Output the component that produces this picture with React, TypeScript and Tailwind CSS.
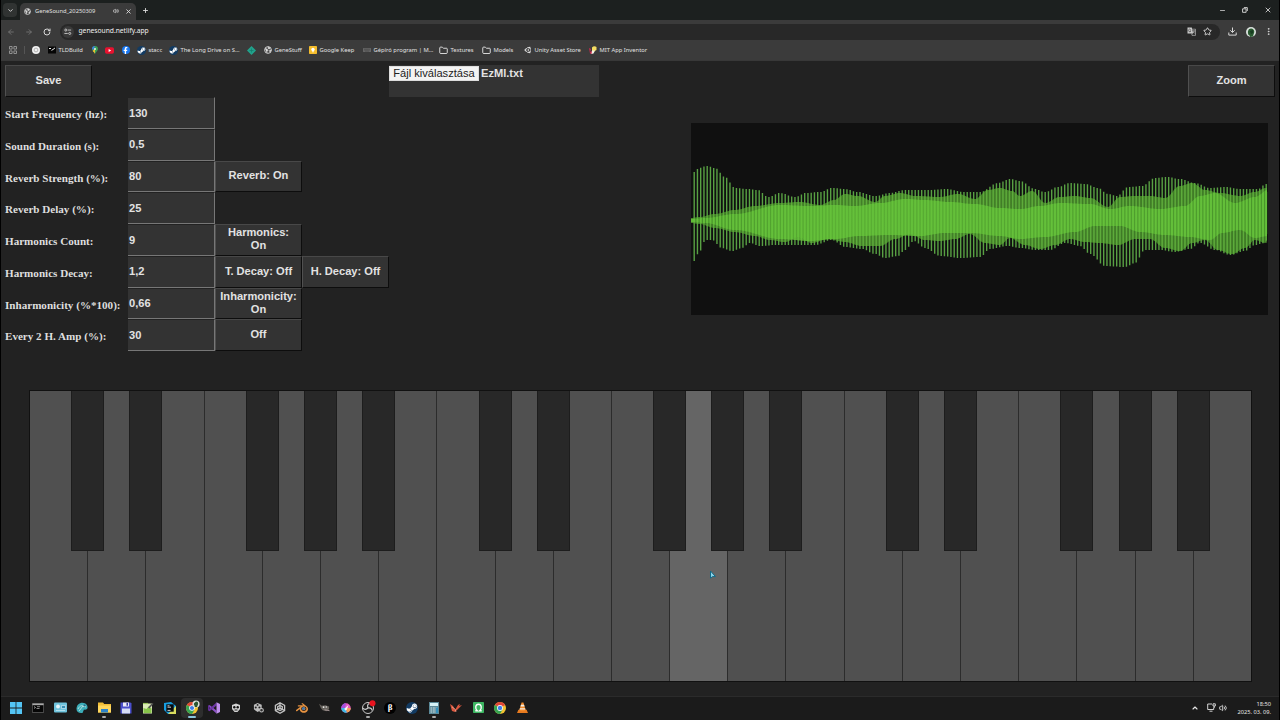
import React from "react";
import {
  FaSteamSymbol,
  FaFacebookF,
  FaUnity,
} from "react-icons/fa";
import { SiBlender } from "react-icons/si";
import {
  ArrowLeft,
  ArrowRight,
  ChevronDown,
  ChevronUp,
  EllipsisVertical,
  Folder,
  Minus,
  Plus,
  RotateCw,
  Star,
  Volume2,
  X,
} from "lucide-react";

type Pt = [number, number];

const OUTER_TOP: Pt[] = [
  [691, 219], [693, 186], [694, 172], [699, 168], [707, 166], [715, 168], [725, 177], [735, 188], [748, 189],
  [758, 190], [768, 197], [780, 193], [795, 197], [806, 193], [820, 192], [832, 188], [845, 189], [858, 192],
  [875, 196], [890, 193], [905, 190], [930, 190], [945, 189], [965, 192], [980, 192], [998, 183], [1010, 179],
  [1020, 181], [1035, 189], [1045, 192], [1058, 187], [1070, 183], [1085, 184], [1098, 188], [1108, 194],
  [1117, 196], [1128, 187], [1142, 186], [1155, 178], [1167, 177], [1180, 179], [1195, 183], [1210, 188],
  [1225, 187], [1240, 189], [1258, 189], [1266, 184], [1268, 190],
];

const OUTER_BOTTOM: Pt[] = [
  [691, 223], [694, 261], [698, 254], [706, 240], [712, 240], [722, 248], [732, 251], [742, 248], [750, 243],
  [760, 246], [775, 245], [800, 245], [815, 245], [832, 240], [845, 247], [862, 249], [875, 254], [885, 258],
  [898, 256], [905, 250], [914, 241], [925, 248], [940, 256], [960, 258], [980, 257], [990, 249], [1008, 246],
  [1020, 248], [1035, 250], [1050, 250], [1065, 243], [1080, 246], [1090, 254], [1105, 266], [1125, 267],
  [1135, 263], [1145, 250], [1160, 250], [1175, 252], [1190, 249], [1200, 243], [1215, 250], [1230, 255],
  [1245, 251], [1255, 245], [1265, 243], [1268, 236],
];

const BODY_TOP: Pt[] = [
  [691, 218], [700, 217], [715, 214], [735, 210], [755, 206], [780, 203], [800, 202], [820, 205], [834, 200],
  [845, 194], [858, 196], [875, 202], [885, 196], [900, 193], [915, 196], [940, 197], [958, 194], [975, 199],
  [988, 190], [1000, 188], [1012, 191], [1020, 196], [1032, 191], [1045, 203], [1060, 197], [1075, 196],
  [1090, 198], [1108, 207], [1120, 197], [1135, 196], [1150, 196], [1165, 198], [1180, 186], [1192, 183],
  [1205, 190], [1220, 193], [1240, 196], [1255, 192], [1266, 188], [1268, 192],
];

const BODY_BOTTOM: Pt[] = [
  [691, 223], [700, 224], [715, 228], [735, 232], [755, 236], [770, 240], [785, 242], [798, 237], [812, 243],
  [828, 239], [845, 242], [862, 246], [880, 246], [895, 239], [910, 234], [925, 240], [940, 241], [955, 239],
  [970, 234], [985, 243], [1000, 245], [1010, 238], [1025, 245], [1040, 249], [1055, 245], [1070, 239],
  [1085, 242], [1100, 243], [1118, 245], [1135, 239], [1150, 239], [1165, 248], [1180, 251], [1192, 243],
  [1205, 240], [1218, 250], [1232, 254], [1245, 248], [1255, 240], [1266, 243], [1268, 234],
];

const CORE_TOP: Pt[] = [
  [691, 219], [705, 218], [735, 214], [780, 205], [810, 206], [835, 205], [855, 206], [880, 203], [905, 199],
  [925, 200], [950, 202], [975, 204], [1000, 208], [1020, 209], [1040, 206], [1060, 203], [1090, 204],
  [1110, 209], [1130, 206], [1160, 209], [1185, 206], [1200, 196], [1215, 193], [1235, 203], [1255, 197],
  [1268, 190],
];

const CORE_BOTTOM: Pt[] = [
  [691, 222], [705, 223], [735, 230], [780, 239], [810, 241], [835, 239], [860, 236], [890, 235], [920, 236],
  [945, 233], [970, 233], [1000, 236], [1020, 239], [1045, 237], [1075, 232], [1095, 226], [1120, 226],
  [1140, 232], [1165, 235], [1190, 237], [1210, 240], [1222, 233], [1240, 230], [1255, 238], [1268, 236],
];

const WAVE_X0 = 691;
const BAR_PITCH = 3.25;

function at(points: Pt[], x: number): number {
  for (let i = 1; i < points.length; i++) {
    const [x1, y1] = points[i];
    if (x <= x1) {
      const [x0, y0] = points[i - 1];
      const t = (x - x0) / (x1 - x0);
      return y0 + (y1 - y0) * ((1 - Math.cos(Math.PI * t)) / 2);
    }
  }
  return points[points.length - 1][1];
}

function band(top: Pt[], bottom: Pt[]): string {
  const up: string[] = [];
  const down: string[] = [];
  for (let x = 691; x <= 1268; x += 1.5) {
    up.push(`${x} ${at(top, x).toFixed(1)}`);
    down.unshift(`${x} ${at(bottom, x).toFixed(1)}`);
  }
  return `M${up.join("L")}L${down.join("L")}Z`;
}

function bars(top: Pt[], bottom: Pt[], offset: number): string {
  let d = "";
  for (let x = WAVE_X0 + offset; x < 1268; x += BAR_PITCH) {
    d += `M${x.toFixed(2)} ${at(top, x).toFixed(1)}V${at(bottom, x).toFixed(1)}`;
  }
  return d;
}

function Waveform() {
  return (
    <svg className="block h-[192px] w-[577px] bg-[#101010]" viewBox="691 123 577 192">
      <defs>
        <linearGradient id="grain" x1="691" x2="1268" y1="0" y2="0" gradientUnits="userSpaceOnUse">
          <stop offset="0" stopColor="#2c6a1c" stopOpacity="0.6" />
          <stop offset="0.12" stopColor="#2c6a1c" stopOpacity="0.35" />
          <stop offset="0.25" stopColor="#2c6a1c" stopOpacity="0.15" />
          <stop offset="0.5" stopColor="#2c6a1c" stopOpacity="0.25" />
          <stop offset="1" stopColor="#2c6a1c" stopOpacity="0.5" />
        </linearGradient>
      </defs>
      <path d={bars(OUTER_TOP, OUTER_BOTTOM, 3.2)} stroke="#58a043" strokeWidth="1.4" fill="none" />
      <path d={band(BODY_TOP, BODY_BOTTOM)} fill="#4f932f" fillOpacity="0.88" />
      <path d={bars(BODY_TOP, BODY_BOTTOM, 3.2)} stroke="#67bd42" strokeOpacity="0.6" strokeWidth="1.3" fill="none" />
      <path d={band(CORE_TOP, CORE_BOTTOM)} fill="#66c63b" fillOpacity="0.82" />
      <path d={bars(BODY_TOP, BODY_BOTTOM, 4.85)} stroke="url(#grain)" strokeWidth="1" fill="none" />
    </svg>
  );
}

function Globe({ className = "size-2" }: { className?: string }) {
  return (
    <svg className={className} viewBox="0 0 16 16">
      <circle cx="8" cy="8" r="6.8" fill="#444" stroke="#d5d5d5" strokeWidth="1.8" />
      <path d="M2 5l4 1 2 3-2 2v3M9 1.5L8 5l3 1 1-3M15 8l-4 1 1 4" fill="#ddd" stroke="#ddd" strokeWidth="1.2" />
    </svg>
  );
}

function SteamDisc({ className = "size-2.5" }: { className?: string }) {
  return (
    <span className={`${className} flex items-center justify-center overflow-hidden rounded-full bg-[#123b63]`}>
      <FaSteamSymbol className="size-full text-white" />
    </span>
  );
}

function AppsGrid() {
  return (
    <svg className="size-2" viewBox="0 0 8 8" fill="none" stroke="#a5a5a5" strokeWidth="0.8">
      <path d="M.5.5h2.6v2.6H.5zM4.9.5h2.6v2.6H4.9zM.5 4.9h2.6v2.6H.5zM4.9 4.9h2.6v2.6H4.9z" />
    </svg>
  );
}

function TabStrip() {
  return (
    <div className="flex h-5 items-end bg-[#1c201f] text-[#e0e0e0]">
      <div className="mb-[3px] ml-[2px] flex h-[14px] w-[14px] items-center justify-center rounded bg-[#303332]">
        <ChevronDown className="size-[7px]" strokeWidth={3} />
      </div>
      <div className="ml-[3px] flex h-[17px] w-[116px] items-center rounded-t-[5px] bg-[#3b3b3b] pb-[1px] pl-[4px]">
        <Globe className="size-[7px]" />
        <span className="ml-[4px] w-[78px] whitespace-nowrap text-[5.75px]">GeneSound_20250309</span>
        <Volume2 className="size-[6px]" strokeWidth={2.5} />
        <X className="ml-[6px] size-[7px]" strokeWidth={3} />
      </div>
      <Plus className="mb-[6px] ml-[6px] size-[7px]" strokeWidth={3} />
      <div className="mb-[6px] ml-auto mr-[7px] flex items-center">
        <Minus className="size-[7px]" strokeWidth={2.5} />
        <svg className="ml-[16px] size-[6px]" viewBox="0 0 6 6" fill="none" stroke="#e0e0e0" strokeWidth="0.9">
          <path d="M.6 1.8h3.5v3.5H.6zM1.9 .6h3.4v3.4" />
        </svg>
        <X className="ml-[16px] size-[8px]" strokeWidth={2.5} />
      </div>
    </div>
  );
}

function AddressRow() {
  return (
    <div className="flex h-[23px] items-center bg-[#3b3b3b] text-[#d8d8d8]">
      <ArrowLeft className="ml-[6px] size-[8px] text-[#777]" strokeWidth={2.5} />
      <ArrowRight className="ml-[10px] size-[8px] text-[#777]" strokeWidth={2.5} />
      <RotateCw className="ml-[10px] size-[8px]" strokeWidth={3} />
      <div className="ml-[9px] flex h-4 w-[1160px] items-center rounded-full bg-[#282828] pl-[2px] pr-[8px]">
        <span className="flex size-[12px] items-center justify-center rounded-full bg-[#3a3a3a]">
          <svg className="size-[7.5px]" viewBox="0 0 8 8" fill="none" stroke="#d5d5d5" strokeWidth="0.9">
            <circle cx="1.9" cy="2.2" r="1.1" />
            <path d="M4 2.2h3.6M.4 5.8H4" />
            <circle cx="6.1" cy="5.8" r="1.1" />
          </svg>
        </span>
        <span className="ml-[4.5px] text-[6.7px] text-[#f0f0f0]">genesound.netlify.app</span>
        <svg className="ml-auto size-[9px]" viewBox="0 0 9 9">
          <path d="M.5.5h4.3l1.4 6H.5z" fill="#c9c9c9" />
          <path d="M4.9 2.2h3.6v6.2H5M4.7 6.5L5 8.4M5.8 4h2.4M7 3.3c0 1.6-.5 2.5-1.4 3.2M6.2 4.7l1.6 1.8" fill="none" stroke="#c9c9c9" strokeWidth="0.6" />
          <path d="M3.7 2.7a1.3 1.3 0 1 0 .2 1.2H2.8" fill="none" stroke="#333" strokeWidth="0.6" />
        </svg>
        <Star className="ml-[7px] size-[9px]" strokeWidth={2.5} />
      </div>
      <svg className="ml-[8px] size-[9px]" viewBox="0 0 9 9" fill="none" stroke="#d8d8d8">
        <path d="M4.500 .5v4.800M2.300 3.300l2.200 2.200 2.200-2.200M.8 5.500v2.600h7.400V5.500" />
      </svg>
      <svg className="ml-[9px] size-[10px]" viewBox="0 0 10 10">
        <circle cx="5" cy="5" r="5" fill="#d9e0dc" />
        <path d="M5 1.5c2 0 3.3 1.5 3.3 3.2C8.2 6 7.5 7 7 9.5L4 10c.3-1-.5-1.800-1.600-2.300C1.200 4.500 2.500 1.500 5 1.500z" fill="#28582f" />
        <path d="M4 4l3-1v3L5 7z" fill="#173c20" />
      </svg>
      <EllipsisVertical className="ml-[8px] size-[9px]" strokeWidth={2.5} />
    </div>
  );
}

type Bookmark = { icon: React.ReactNode; label?: string; box: string };

const BOOKMARKS: Bookmark[] = [
  {
    box: "w-[16px]",
    icon: (
      <svg className="size-2" viewBox="0 0 8 8">
        <circle cx="4" cy="4" r="4" fill="#f1f1f1" />
        <circle cx="4" cy="4" r="1.9" fill="none" stroke="#999" strokeWidth="0.7" />
      </svg>
    ),
  },
  {
    box: "w-[43px]",
    label: "TLDBuild",
    icon: (
      <svg className="size-2" viewBox="0 0 8 8">
        <path d="M0 .5h8v7H0z" fill="#050505" />
        <path d="M1 2h2v1H1zM3.500 4L7 1.500v1L3.500 5z" fill="#eee" />
      </svg>
    ),
  },
  {
    box: "w-[15px]",
    icon: (
      <svg className="size-2" viewBox="0 0 8 8">
        <path d="M4 8C3.500 6 1 5 1 3a3 3 0 0 1 6 0c0 2-2.500 3-3 5z" fill="#3ba155" />
        <path d="M1 3a3 3 0 0 1 3-3L2.500 3.800z" fill="#3d7de0" />
        <path d="M4 8C3.700 6.600 2.500 6 1.700 5L4 2.500z" fill="#edbe32" />
        <circle cx="4" cy="3" r="1" fill="#eee" />
      </svg>
    ),
  },
  {
    box: "w-[16px]",
    icon: (
      <svg className="size-[9px]" viewBox="0 0 9 9">
        <rect y="1.300" width="9" height="6.400" rx="1.800" fill="#e8122f" />
        <path d="M3.600 3v3l2.600-1.500z" fill="#fff" />
      </svg>
    ),
  },
  {
    box: "w-[16px]",
    icon: (
      <span className="flex size-2 items-end justify-center rounded-full bg-[#1877f2]">
        <FaFacebookF className="size-[7px] text-white" />
      </span>
    ),
  },
  { box: "w-[32px]", label: "stacc", icon: <SteamDisc className="size-[9px]" /> },
  { box: "w-[78px]", label: "The Long Drive on S...", icon: <SteamDisc className="size-[9px]" /> },
  {
    box: "w-[16px]",
    icon: (
      <svg className="size-[9px]" viewBox="0 0 9 9">
        <path d="M4.500 0L9 4.500 4.500 9 0 4.500z" fill="#21a38d" />
        <path d="M4.500 2.500v4M2.500 4.500h4" stroke="#137b6c" strokeWidth="0.700" />
      </svg>
    ),
  },
  { box: "w-[45px]", label: "GeneStuff", icon: <Globe /> },
  {
    box: "w-[54px]",
    label: "Google Keep",
    icon: (
      <svg className="size-2" viewBox="0 0 8 8">
        <rect width="8" height="8" rx="0.800" fill="#f5bd2c" />
        <circle cx="4" cy="3.500" r="1.700" fill="#fff" />
        <path d="M3.200 5.300h1.600v1H3.200z" fill="#fff" />
      </svg>
    ),
  },
  {
    box: "w-[77px]",
    label: "Gépíró program | M...",
    icon: (
      <svg className="size-2" viewBox="0 0 8 8">
        <rect y="2" width="8" height="4" rx="0.500" fill="#666" />
        <path d="M1 3h6M1 4h6M2 5.200h4" stroke="#333" strokeWidth="0.500" strokeDasharray="0.700 0.400" />
      </svg>
    ),
  },
  { box: "w-[43px]", label: "Textures", icon: <Folder className="size-[9px]" strokeWidth={2.5} /> },
  { box: "w-[41px]", label: "Models", icon: <Folder className="size-[9px]" strokeWidth={2.5} /> },
  { box: "w-[65px]", label: "Unity Asset Store", icon: <FaUnity className="size-[8px]" /> },
  {
    box: "w-[70px]",
    label: "MIT App Inventor",
    icon: (
      <svg className="size-2" viewBox="0 0 8 8">
        <path d="M3 1.500Q5-.5 7.500 1v3L5 5.500H3z" fill="#f4dc63" />
        <path d="M0 2l2 1-1 3 2-1v3l-2-.5z" fill="#c9294c" />
        <path d="M3 4.500h3L4.500 7.500 2.500 8z" fill="#f3f3e8" />
      </svg>
    ),
  },
];

function BookmarkBar() {
  return (
    <div className="flex h-[18px] items-center border-b border-[#383838] bg-[#3b3b3b] pb-[3px] pl-[8px] text-[5.8px] text-[#e2e2e2]">
      <AppsGrid />
      <span className="ml-[7px] mr-[6px] h-[8px] w-px bg-[#555]" />
      {BOOKMARKS.map((b, i) => (
        <div key={i} className={`${b.box} flex shrink-0 items-center gap-[2.5px] whitespace-nowrap`}>
          <span className="flex w-[9px] shrink-0 justify-center">{b.icon}</span>
          {b.label && <span>{b.label}</span>}
        </div>
      ))}
    </div>
  );
}

function PanelButton({ children }: { children: React.ReactNode }) {
  return (
    <button className="flex h-full w-[87px] shrink-0 items-center justify-center border-b-[1.5px] border-l-[1.5px] border-r-[1.5px] border-t-[1.5px] border-b-[#0d0d0d] border-l-[#505050] border-r-[#0d0d0d] border-t-[#484848] bg-[#333] px-[3px] pb-[1px] text-center text-[11.1px] font-bold leading-[13px] text-[#e2e2e2]">
      {children}
    </button>
  );
}

type Setting = { label: string; value: string; buttons: string[] };

const SETTINGS: Setting[] = [
  { label: "Start Frequency (hz):", value: "130", buttons: [] },
  { label: "Sound Duration (s):", value: "0,5", buttons: [] },
  { label: "Reverb Strength (%):", value: "80", buttons: ["Reverb: On"] },
  { label: "Reverb Delay (%):", value: "25", buttons: [] },
  { label: "Harmonics Count:", value: "9", buttons: ["Harmonics: On"] },
  { label: "Harmonics Decay:", value: "1,2", buttons: ["T. Decay: Off", "H. Decay: Off"] },
  { label: "Inharmonicity (%*100):", value: "0,66", buttons: ["Inharmonicity: On"] },
  { label: "Every 2 H. Amp (%):", value: "30", buttons: ["Off"] },
];

function SettingsPanel() {
  return (
    <div className="flex flex-col">
      {SETTINGS.map((s) => (
        <div key={s.label} className="flex h-[31.75px]">
          <div className="flex w-[123px] items-center whitespace-nowrap pt-[3px] font-['Liberation_Serif',serif] text-[11.1px] font-bold text-[#dedede]">
            {s.label}
          </div>
          <div className="flex w-[87px] items-center border-b-[1.5px] border-r-[1.5px] border-t border-b-[#777] border-r-[#777] border-t-[#222] bg-[#333] pl-[1px] text-[11.1px] font-bold text-[#e2e2e2]">
            {s.value}
          </div>
          {s.buttons.map((b) => (
            <PanelButton key={b}>{b}</PanelButton>
          ))}
        </div>
      ))}
    </div>
  );
}

const WHITE_KEYS = Array.from({ length: 21 }, (_, i) => i);
const SHARP_AFTER = new Set([0, 1, 3, 4, 5, 7, 8, 10, 11, 12, 14, 15, 17, 18, 19]);
const PRESSED = 11;

function Cursor() {
  return (
    <svg className="absolute left-[39px] top-[179px] z-20 h-[10px] w-[8px]" viewBox="0 0 8 10">
      <path d="M1.500 1v7.200l2-1.600h3z" fill="#8bd4e8" stroke="#146987" strokeWidth="1" />
    </svg>
  );
}

function Piano() {
  return (
    <div className="flex h-[292px] w-[1223px] border border-[#111] bg-[#505050]">
      {WHITE_KEYS.map((k) => (
        <div
          key={k}
          className={`relative flex-1 ${k < 20 ? "border-r border-r-[#2c2c2c]" : ""} ${k === PRESSED ? "bg-[#656565]" : "bg-[#505050]"}`}
        >
          {SHARP_AFTER.has(k) && (
            <div className="absolute -right-[17px] top-0 z-10 h-[160px] w-[33px] border border-t-0 border-[#1d1d1d] bg-[#282828]" />
          )}
          {k === PRESSED && <Cursor />}
        </div>
      ))}
    </div>
  );
}

function ChromeLogo({ className = "size-3" }: { className?: string }) {
  return (
    <svg className={className} viewBox="0 0 12 12">
      <circle cx="6" cy="6" r="6" fill="#f2c231" />
      <path d="M6 6L.8 3A6 6 0 0 1 11.200 3z" fill="#df4638" />
      <path d="M6 6L.8 3A6 6 0 0 0 6 12l2.400-4z" fill="#36a352" />
      <circle cx="6" cy="6" r="2.900" fill="#fff" />
      <circle cx="6" cy="6" r="2.200" fill="#3f7fe8" />
    </svg>
  );
}

function Die({ className = "size-3" }: { className?: string }) {
  return (
    <svg className={className} viewBox="0 0 12 12">
      <path d="M5 1l4.500 2v5.500L5 11 1 8V3z" fill="#bdbdbd" />
      <circle cx="5" cy="3.200" r="1" fill="#222" />
      <circle cx="3" cy="6" r="1.100" fill="#222" />
      <circle cx="7" cy="6" r="1.100" fill="#222" />
      <circle cx="9.300" cy="9" r="2" fill="#2b2b2b" stroke="#c4c4c4" strokeWidth="1.100" />
    </svg>
  );
}

const TASKS: { icon: React.ReactNode; mark?: "active" | "open" }[] = [
  {
    icon: (
      <svg className="size-3" viewBox="0 0 12 12" fill="#54c5f5">
        <path d="M0 0h5.600v5.600H0zM6.400 0H12v5.600H6.400zM0 6.400h5.600V12H0zM6.400 6.400H12V12H6.400z" />
      </svg>
    ),
  },
  {
    icon: (
      <svg className="size-3" viewBox="0 0 12 12">
        <path d="M.4 1.500h11.200v9H.4z" fill="#060606" stroke="#777" strokeWidth="0.600" />
        <path d="M.4 1.500h11.200v1.700H.4z" fill="#aaa" />
        <path d="M2 4.500l1.500 1L2 6.500M4.500 6.500h3M5 4.700h3" stroke="#ddd" strokeWidth="0.600" fill="none" />
      </svg>
    ),
  },
  {
    icon: (
      <svg className="size-[13px]" viewBox="0 0 13 13">
        <rect y="1.500" width="13" height="10" rx="1" fill="#6fc4dd" />
        <circle cx="4" cy="5.500" r="1.900" fill="#e8f6fb" />
        <path d="M7.500 4.500h4v3h-4zM2 9.500h9" fill="#358eb3" stroke="#e0f4fa" strokeWidth="0.600" />
      </svg>
    ),
  },
  {
    icon: (
      <svg className="size-3" viewBox="0 0 12 12">
        <path d="M.5 7C.5 3 3 .7 6.500.7S12 3.500 11.500 6c-.3 1.500-2 2-3.500 1.500L6.500 11C3 11.500.500 10 .5 7z" fill="#3cadb8" />
        <path d="M2 7c2-4 5-4 6-2M3 9l4-5 3 1" stroke="#bde7e4" strokeWidth="0.900" fill="none" />
        <circle cx="8.500" cy="3.500" r="1" fill="#22668a" />
      </svg>
    ),
  },
  {
    mark: "open",
    icon: (
      <svg className="size-[13px]" viewBox="0 0 13 13">
        <path d="M0 1.500h5l1.200 1.500H13v8.500H0z" fill="#f0bd37" />
        <path d="M0 4.500h13v7H0z" fill="#ffd75e" />
        <path d="M3 8h7v3.500H3z" fill="#2c83c9" />
      </svg>
    ),
  },
  {
    icon: (
      <svg className="size-3" viewBox="0 0 12 12">
        <path d="M.5.5h10l1 1v10H.5z" fill="#4a4fcc" />
        <path d="M3 .5h6v4H3z" fill="#e9e9f7" />
        <path d="M2 6.500h8v5H2z" fill="#d5dcf5" />
        <path d="M6.500 1h1.500v2.800H6.500z" fill="#3338a0" />
      </svg>
    ),
  },
  {
    icon: (
      <svg className="size-3" viewBox="0 0 12 12">
        <path d="M1 1.500h9v10H1z" fill="#dcebb8" />
        <path d="M1.500 6l3 1 2-2.500 3 2V11h-8z" fill="#86c34a" />
        <path d="M6 5.500l4-4.500 1.500.8L7.500 6.500z" fill="#555" />
        <path d="M1 1.500h5" stroke="#9bc65e" strokeWidth="1.200" />
      </svg>
    ),
  },
  {
    icon: (
      <svg className="size-3" viewBox="0 0 12 12">
        <path d="M0 1l7-1 5 4v8H4L0 8z" fill="#179ee2" />
        <path d="M6 10l6-6v8H4z" fill="#d8dc5e" />
        <path d="M2.300 2.300h7.400v7.400H2.300z" fill="#080b0e" />
        <path d="M3.500 3.800h2M3.500 5.200h3.500M3.500 8.400h3" stroke="#fff" strokeWidth="0.800" />
      </svg>
    ),
  },
  {
    mark: "active",
    icon: (
      <svg className="size-[15px]" viewBox="0 0 15 15">
        <circle cx="7" cy="8" r="6" fill="#f2c231" />
        <path d="M7 8L1.800 5A6 6 0 0 1 12.200 5z" fill="#df4638" />
        <path d="M7 8L1.800 5A6 6 0 0 0 7 14l2.400-4z" fill="#36a352" />
        <circle cx="7" cy="8" r="2.800" fill="#fff" />
        <circle cx="7" cy="8" r="2.100" fill="#3f7fe8" />
        <circle cx="11" cy="4" r="3.600" fill="#dfe5df" />
        <path d="M11 1.500c2 0 2.500 1.500 2 3L12 7H9.800C10 5.500 8.500 5 9 3.200z" fill="#2c5632" />
      </svg>
    ),
  },
  {
    icon: (
      <svg className="size-3" viewBox="0 0 12 12">
        <path d="M8.500.5v11L0 4l1.500-1 7 5.500" fill="#8a4fc4" />
        <path d="M0 8l8.500-7.500v3L1.500 9.200z" fill="#6d36a5" />
        <path d="M0 4v4l1.500 1V3z" fill="#5f2d95" />
        <path d="M8.500.3L12 2v8l-3.500 1.700z" fill="#c190ee" />
      </svg>
    ),
  },
  {
    icon: (
      <svg className="size-[10px]" viewBox="0 0 10 10">
        <path d="M1 2l4-1.500L9 2v4L6.500 9h-3L1 6z" fill="#d2d2d2" />
        <circle cx="3.300" cy="4.300" r="1.200" fill="#111" />
        <circle cx="6.700" cy="4.300" r="1.200" fill="#111" />
        <path d="M3.500 7h3" stroke="#222" />
      </svg>
    ),
  },
  { icon: <Die className="size-[11px]" /> },
  {
    icon: (
      <svg className="size-3" viewBox="0 0 12 12" fill="none" stroke="#c2c2c2" strokeWidth="1.300">
        <path d="M6 .8l4.600 2.600v5.200L6 11.200 1.400 8.600V3.400zM6 6V1M6 6l4.500 2.600M6 6L1.500 8.600" />
        <path d="M6 3.500l2.300 1.200v2.600L6 8.600 3.700 7.300V4.700z" />
      </svg>
    ),
  },
  {
    icon: (
      <span className="relative flex">
        <SiBlender className="size-3 text-[#e79341]" />
        <span className="absolute left-[6px] top-[5px] size-[3px] rounded-full bg-[#3c78b5]" />
      </span>
    ),
  },
  {
    icon: (
      <svg className="size-[11px]" viewBox="0 0 12 12">
        <path d="M0 2l3 2 4-.5L11 5v3l-3 2-4-1-2-2.500z" fill="#67635d" />
        <circle cx="5" cy="5.500" r="1" fill="#eee" />
        <circle cx="8" cy="5.500" r="0.900" fill="#ddd" />
        <path d="M6 8.500l5.500 1" stroke="#a99" />
      </svg>
    ),
  },
  {
    icon: (
      <svg className="size-[10px]" viewBox="0 0 12 12">
        <circle cx="6" cy="6" r="5.700" fill="#e65bc0" />
        <path d="M.3 6a5.700 5.700 0 0 1 5.700-5.700L5 6z" fill="#a250dd" />
        <path d="M.3 6a5.700 5.700 0 0 0 7 5.500L5 6z" fill="#3dbbe4" />
        <path d="M7 11.500A5.700 5.700 0 0 0 11.700 6L6 6z" fill="#f2a358" />
        <path d="M4 7l5-4.500L7 8l-2 1z" fill="#f7f0f7" />
      </svg>
    ),
  },
  {
    mark: "open",
    icon: (
      <svg className="size-[15px]" viewBox="0 0 15 15">
        <circle cx="7" cy="8" r="5.500" fill="#1a1a1a" stroke="#c9c9c9" />
        <path d="M7 8c-1-3 0-4 1.500-4.300M7 8c3-.5 4 1 4 2.500M7 8c-2 2-4 1.500-5 0" stroke="#c9c9c9" strokeWidth="1.200" fill="none" />
        <circle cx="11.500" cy="3.300" r="3" fill="#e8141f" />
      </svg>
    ),
  },
  {
    icon: (
      <span className="flex size-3 items-center justify-center rounded-full bg-black font-['Liberation_Serif',serif] text-[9px] font-bold text-white">
        β
      </span>
    ),
  },
  { icon: <SteamDisc className="size-3" /> },
  {
    mark: "open",
    icon: (
      <svg className="size-3" viewBox="0 0 12 12">
        <path d="M1 0h10v12H1z" fill="#5b8998" />
        <path d="M2 1h8v3H2z" fill="#d5f1f6" />
        <path d="M2.500 6h7M2.500 8h7M2.500 10h7" stroke="#cde2e5" strokeWidth="1.200" strokeDasharray="1.800 0.700" />
        <path d="M8 5.500h2v5.500H8z" fill="#328fbc" />
      </svg>
    ),
  },
  {
    icon: (
      <svg className="size-3" viewBox="0 0 12 12">
        <path d="M0 2l3 2 2 4 3-5 2-1-1 2 3-1-3 3-4 4-3-1z" fill="#d9573e" />
        <path d="M2 5l3 2 1 3" stroke="#f3b29f" strokeWidth="0.700" fill="none" />
      </svg>
    ),
  },
  {
    icon: (
      <svg className="size-[11px]" viewBox="0 0 12 12">
        <rect width="12" height="12" rx="0.800" fill="#3db662" />
        <path d="M2.500 9.600h2.200C2 7.300 2.500 2.500 6 2.500s4 4.800 1.300 7.100h2.200" stroke="#fff" strokeWidth="1.500" fill="none" />
      </svg>
    ),
  },
  { icon: <ChromeLogo /> },
  {
    icon: (
      <svg className="size-[11px]" viewBox="0 0 12 12">
        <path d="M1.500 8.500h9L12 12H0z" fill="#e77a1f" />
        <path d="M5 .5h2L9.500 9q-3.500 2-7 0z" fill="#f28b2a" />
        <path d="M4.300 3h3.400l.6 2H3.700zM3.200 6.700h5.600l.5 1.600H2.700z" fill="#f2eee6" />
      </svg>
    ),
  },
];

function Taskbar() {
  return (
    <div className="flex h-[24px] items-center border-t border-[#2b2b2b] bg-[#1b1b1b] pb-[2px] pl-[4px] text-[#e5e5e5]">
      {TASKS.map((t, i) => (
        <div
          key={i}
          className={`relative flex h-[20px] w-[22px] shrink-0 items-center justify-center rounded-sm ${t.mark === "active" ? "bg-[#2d2d2d]" : ""}`}
        >
          {t.icon}
          {t.mark === "active" && <span className="absolute bottom-0 left-[7px] h-[1.5px] w-[8px] rounded bg-[#8bc6df]" />}
          {t.mark === "open" && <span className="absolute bottom-0 left-[9px] h-[1.5px] w-[4px] rounded bg-[#aaa]" />}
        </div>
      ))}
      <ChevronUp className="ml-auto size-[8px]" strokeWidth={3.5} />
      <svg className="ml-[8px] size-[9px]" viewBox="0 0 9 9" fill="none" stroke="#e5e5e5" strokeWidth="0.900">
        <path d="M5 1H.7v5.500h6V4.500M2.500 8.200h3M6 .8h2.300V3H6zM7.200 3v2" />
      </svg>
      <Volume2 className="ml-[3px] size-[8px]" strokeWidth={2.5} />
      <div className="ml-[8px] mr-[8px] w-[36px] text-right text-[5.7px] leading-[8px]">
        <div>18:50</div>
        <div className="whitespace-nowrap">2025. 03. 09.</div>
      </div>
    </div>
  );
}

export default function App() {
  return (
    <div className="flex h-[720px] w-[1280px] flex-col overflow-hidden border-x border-black bg-[#222] font-['Noto_Sans','Open_Sans',sans-serif]">
      <TabStrip />
      <AddressRow />
      <BookmarkBar />
      <main className="flex flex-1 flex-col pt-[4px] font-['Liberation_Sans',Arial,sans-serif]">
        <div className="flex h-[32px] items-stretch justify-between pl-[4px] pr-[4px]">
          <div className="flex">
            <PanelButton>Save</PanelButton>
            <div className="ml-[297px] flex h-[32px] w-[210px] items-start bg-[#333] pt-[1px]">
              <span className="flex h-[15px] w-[90px] items-center justify-center whitespace-nowrap border border-[#ddd] bg-[#f3f3f3] text-[11.1px] text-[#222]">
                Fájl kiválasztása
              </span>
              <span className="ml-[2px] text-[11.1px] font-bold leading-[15px] text-[#e2e2e2]">EzMl.txt</span>
            </div>
          </div>
          <PanelButton>Zoom</PanelButton>
        </div>
        <div className="flex justify-between pl-[4px] pr-[11px]">
          <SettingsPanel />
          <div className="pt-[26px]">
            <Waveform />
          </div>
        </div>
        <div className="mt-[39px] pl-[28px]">
          <Piano />
        </div>
      </main>
      <Taskbar />
    </div>
  );
}
